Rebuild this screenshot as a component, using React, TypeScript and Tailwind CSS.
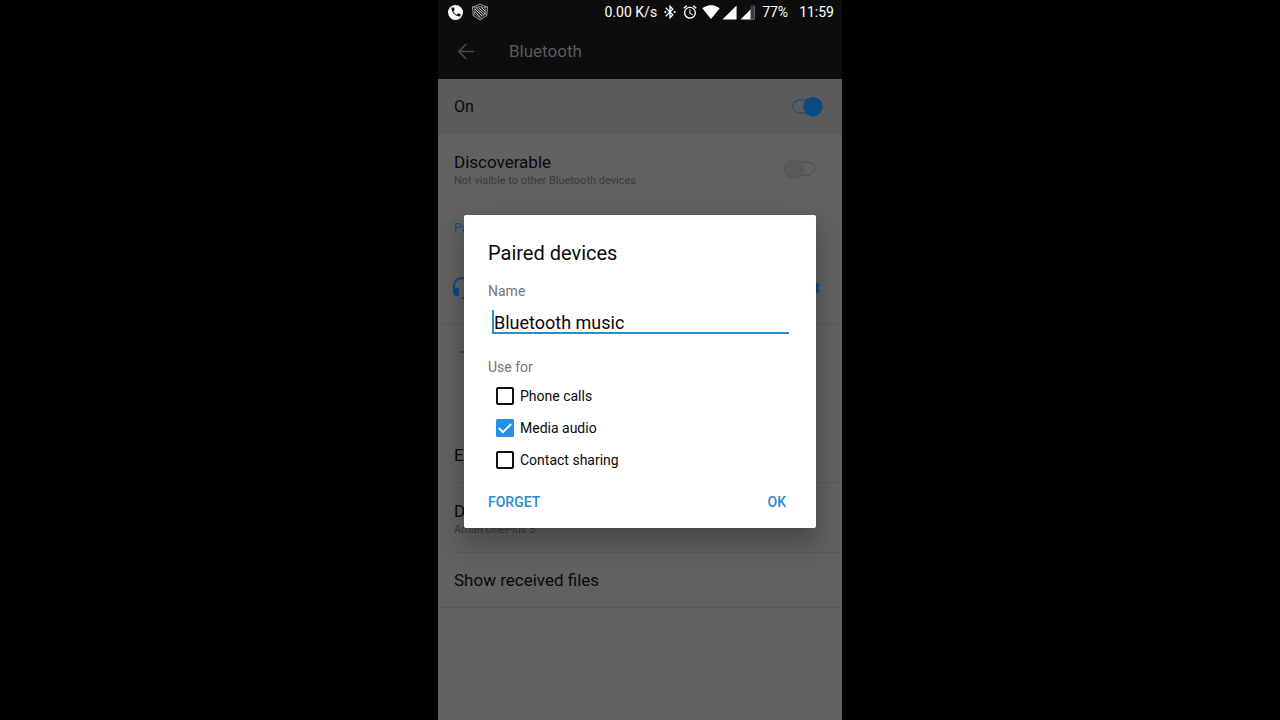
import { useState } from "react";
import {
  MdAlarm,
  MdBluetoothConnected,
  MdHeadsetMic,
  MdPhone,
  MdSettings,
  MdSignalCellular4Bar,
  MdSignalWifi4Bar,
} from "react-icons/md";

const profiles = [
  { id: "calls", label: "Phone calls", on: false },
  { id: "media", label: "Media audio", on: true },
  { id: "contacts", label: "Contact sharing", on: false },
];

function ShieldIcon() {
  return (
    <svg viewBox="0 0 18 18" className="h-[18px] w-[18px]" fill="none" stroke="#b0b0b0">
      <path d="M1.5 3.8 5 3l4-2 4 2 3.5.8-.7 8.7L9 17l-6.8-4.500z" strokeWidth="0.9" />
      <path d="M1.5 3.8 4 4.5l5-1 5 1 2.5-.7M4 4.5l-.5 6.5L9 15.2l5.500-4.200-.5-6.500M2.200 12.500l1.300-1.500M15.800 12.500 14.500 11" strokeWidth="0.7" />
      <path d="M3.700 8.500 9.500 14.300M4 6l7 7M5 4.500l7.800 7.600M7.300 4.200l7 6.800M10 4.200l4.200 4" stroke="#e0e0e0" strokeWidth="1" />
    </svg>
  );
}

function BackArrow() {
  return (
    <svg viewBox="0 0 18 18" className="h-[18px] w-[18px]" fill="none" stroke="currentColor" strokeWidth="1.7">
      <path d="M9.300 1 1.800 8.500l7.500 7.500M1.800 8.500H17" />
    </svg>
  );
}

function StatusBar() {
  return (
    <div className="flex h-6 items-center justify-between bg-[#0d0d0d] pl-[10px] pr-2 text-sm text-white">
      <div className="flex items-center gap-2">
        <span className="flex h-[15px] w-[15px] items-center justify-center rounded-full bg-white">
          <MdPhone size={12} color="#0d0d0d" />
        </span>
        <ShieldIcon />
      </div>
      <div className="flex items-center">
        <span>0.00 K/s</span>
        <MdBluetoothConnected size={16} className="ml-[5px]" />
        <MdAlarm size={16} className="ml-1" />
        <span className="ml-1 flex items-center gap-px">
          <MdSignalWifi4Bar size={18} />
          <MdSignalCellular4Bar size={17} />
          <svg viewBox="0 0 17 17" className="h-[17px] w-[17px]">
            <path d="M15.500 1.500v14h-14z" fill="#fff" />
            <path d="M11.500 1.500h4v14h-4z" fill="#3c3c3c" />
          </svg>
        </span>
        <span className="ml-[6px]">77%</span>
        <span className="ml-[11px]">11:59</span>
      </div>
    </div>
  );
}

function Switch({ label, defaultOn }: { label: string; defaultOn: boolean }) {
  const [on, setOn] = useState(defaultOn);

  return (
    <span className="grid h-5 w-8">
      <svg viewBox="0 0 32 20" className="col-start-1 row-start-1 h-5 w-8">
        {on ? (
          <>
            <rect x="1" y="3" width="28" height="13" rx="6.5" fill="none" stroke="#2b4c6b" strokeWidth="1.3" />
            <circle cx="21" cy="9.7" r="9.7" fill="#0b4a80" />
          </>
        ) : (
          <>
            <rect x="3" y="3" width="27.5" height="13" rx="6.5" fill="none" stroke="#525252" strokeWidth="1.3" />
            <circle cx="10" cy="10" r="9.8" fill="#535353" />
            <circle cx="10" cy="9.5" r="9.3" fill="#5a5a5a" />
          </>
        )}
      </svg>
      <input
        type="checkbox"
        role="switch"
        aria-label={label}
        checked={on}
        onChange={() => setOn(!on)}
        className="col-start-1 row-start-1 h-5 w-8 opacity-0"
      />
    </span>
  );
}

function Settings() {
  return (
    <main className="flex-1 text-[17px] leading-5 text-[#090909]">
      <div className="flex h-[55px] items-center justify-between bg-[#5b5b5b] pl-4 pr-[18px]">
        <span className="text-base">On</span>
        <Switch label="Bluetooth" defaultOn={true} />
      </div>

      <div className="flex h-[70px] items-center justify-between pl-4 pr-[26px]">
        <div className="pt-[3px]">
          <div>Discoverable</div>
          <div className="mt-px text-[11px] leading-4 text-[#3a3a3a]">Not visible to other Bluetooth devices</div>
        </div>
        <Switch label="Discoverable" defaultOn={false} />
      </div>

      <h2 className="flex h-12 items-center pl-4 text-xs text-[#0b4a80]">Paired devices</h2>
      <div className="flex h-[72px] items-center justify-between border-b border-[#585858] pl-3 pr-5 text-[#0b4a80]">
        <MdHeadsetMic size={24} />
        <MdSettings size={20} />
      </div>
      <div className="flex h-[103px] items-start pl-5 pt-5 text-[#0b4a80]">
        <svg viewBox="0 0 16 16" className="h-4 w-4" stroke="currentColor" strokeWidth="1.5">
          <path d="M1 8h14M8 1v14" />
        </svg>
      </div>

      <div className="ml-4 flex h-14 items-center border-b border-[#585858]">Enable</div>
      <div className="ml-4 flex h-[70px] flex-col justify-center border-b border-[#585858] pt-[3px]">
        <div>Device</div>
        <div className="mt-px text-[11px] leading-4 text-[#3a3a3a]">Aman OnePlus 5</div>
      </div>
      <div className="flex h-[55px] items-center border-b border-[#585858] pl-4">Show received files</div>
    </main>
  );
}

function ProfileCheckbox({ label, on }: { label: string; on: boolean }) {
  const [checked, setChecked] = useState(on);

  return (
    <label className="flex h-8 items-center gap-[6px] text-sm text-[#0a0a0a]">
      <span className="grid">
        <svg viewBox="0 0 18 18" className="col-start-1 row-start-1 h-[18px] w-[18px]" fill="none">
          {checked ? (
            <>
              <rect width="18" height="18" rx="1.5" fill="#2491e8" />
              <path d="m2.800 9 4.200 4.200L15.200 5" stroke="#fff" strokeWidth="1.9" />
            </>
          ) : (
            <rect x="1" y="1" width="16" height="16" rx="1" stroke="#111" strokeWidth="2" />
          )}
        </svg>
        <input
          type="checkbox"
          checked={checked}
          onChange={() => setChecked(!checked)}
          className="col-start-1 row-start-1 h-[18px] w-[18px] opacity-0"
        />
      </span>
      {label}
    </label>
  );
}

function PairedDialog() {
  return (
    <div
      role="dialog"
      aria-labelledby="dialog-title"
      className="w-full rounded-[2px] bg-white px-6 pb-3 pt-6 shadow-[0_14px_24px_2px_rgba(0,0,0,0.25)]"
    >
      <h2 id="dialog-title" className="text-xl leading-7 text-[#0a0a0a]">
        Paired devices
      </h2>
      <label htmlFor="device-name" className="mt-[14px] block text-sm text-[#757575]">
        Name
      </label>
      <div className="ml-1 mr-[3px] mt-[9px]">
        <input
          id="device-name"
          type="text"
          defaultValue="Bluetooth music"
          className="block h-6 w-full border-b-2 border-l-2 border-[#2a8fc9] pt-[2px] text-lg leading-5 text-[#0a0a0a] outline-none"
        />
      </div>
      <fieldset className="mt-[23px]">
        <legend className="text-sm text-[#757575]">Use for</legend>
        <div className="mt-[3px] pl-2">
          {profiles.map((profile) => (
            <ProfileCheckbox key={profile.id} label={profile.label} on={profile.on} />
          ))}
        </div>
      </fieldset>
      <div className="mt-3 flex justify-between pr-[6px] text-sm font-medium text-[#2a8acb]">
        <button type="button" className="h-7">FORGET</button>
        <button type="button" className="h-7">OK</button>
      </div>
    </div>
  );
}

export default function App() {
  return (
    <div className="min-h-screen bg-black font-[Roboto,sans-serif]">
      <div className="relative mx-auto flex min-h-screen w-full max-w-[404px] flex-col bg-[#616161]">
        <StatusBar />
        <header className="flex h-[55px] items-center gap-[34px] bg-[#0d0d0d] pl-[19px] text-[#5a5a5a]">
          <button type="button" aria-label="Back" className="text-[#484848]">
            <BackArrow />
          </button>
          <h1 className="text-[17px]">Bluetooth</h1>
        </header>
        <Settings />
        <div className="absolute inset-x-0 bottom-0 top-[23px] flex items-center px-[26px]">
          <PairedDialog />
        </div>
      </div>
    </div>
  );
}
